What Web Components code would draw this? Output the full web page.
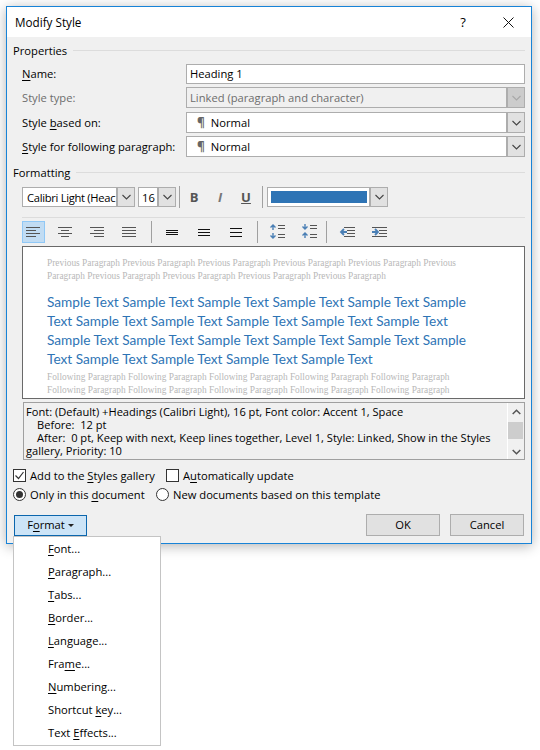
<!DOCTYPE html>
<html>
<head>
<meta charset="utf-8">
<title>Modify Style</title>
<style>
html, body { margin: 0; background: #fff; }
body { font: 11.2px "Open Sans", sans-serif; color: #000; width: 540px; height: 750px; overflow: hidden; }
u { text-underline-offset: 2px; }
</style>
</head>
<body>
<ms-dialog heading="Modify Style">
  <ms-section label="Properties">
    <ms-field><span slot="label"><u>N</u>ame:</span><ms-input value="Heading 1"></ms-input></ms-field>
    <ms-field disabled h="21"><span slot="label">Style type:</span><ms-combo disabled value="Linked (paragraph and character)"></ms-combo></ms-field>
    <ms-field h="21" style="margin-top:1px"><span slot="label">Style <u>b</u>ased on:</span><ms-combo para value="Normal"></ms-combo></ms-field>
    <ms-field h="21"><span slot="label"><u>S</u>tyle for following paragraph:</span><ms-combo para value="Normal"></ms-combo></ms-field>
  </ms-section>
  <ms-formatting></ms-formatting>
  <ms-preview></ms-preview>
  <ms-description></ms-description>
  <ms-options></ms-options>
  <ms-footer></ms-footer>
</ms-dialog>

<script>
const chevron = `<svg width="9" height="6" viewBox="0 0 9 6"><path d="M.5 1l4 4 4-4" fill="none" stroke="currentColor" stroke-width="1.1"/></svg>`;

class MsDialog extends HTMLElement {
	connectedCallback() {
		const shadow = this.attachShadow({ mode: "open" });
		shadow.innerHTML = `
			<style>
				:host {
					display: block;
					box-sizing: border-box;
					width: 526px;
					height: 538px;
					margin: 6px 0 0 6px;
					border: 1px solid #1883d7;
					background: #f0f0f0;
					box-shadow: 0 2px 12px rgba(0,0,0,.3);
				}
				header { display: flex; align-items: center; height: 30px; background: #fff; padding-left: 8px; font-size: 11.7px; }
				header span { flex: 1; }
				.help { width: 12px; margin-right: 34px; font-size: 13px; text-align: center; }
				.close { margin-right: 17px; display: flex; }
				main { padding: 6px 6px 0; }
			</style>
			<header>
				<span>${this.getAttribute('heading')}</span>
				<div class="help">?</div>
				<div class="close"><svg width="11" height="11" viewBox="0 0 11 11"><path d="M.5.5l10 10M10.5.5l-10 10" stroke="#111" stroke-width="1"/></svg></div>
			</header>
			<main><slot></slot></main>
		`;
	}
}
customElements.define('ms-dialog', MsDialog);

class MsSection extends HTMLElement {
	connectedCallback() {
		const shadow = this.attachShadow({ mode: "open" });
		shadow.innerHTML = `
			<style>
				:host { display: block; }
				.head { display: flex; align-items: center; height: 16px; gap: 6px; }
				.head span { margin-bottom: 2px; }
				.head i { flex: 1; height: 1px; background: #dcdcdc; margin-bottom: 1px; }
				.body { display: flex; flex-direction: column; gap: 3px; padding: 5px 0 0 9px; }
			</style>
			<div class="head"><span>${this.getAttribute('label')}</span><i></i></div>
			<div class="body"><slot></slot></div>
		`;
	}
}
customElements.define('ms-section', MsSection);

class MsField extends HTMLElement {
	connectedCallback() {
		const shadow = this.attachShadow({ mode: "open" });
		const h = this.getAttribute('h') || 20;
		shadow.innerHTML = `
			<style>
				:host { display: flex; align-items: center; height: ${h}px; }
				.label { width: 164px; flex: none; white-space: nowrap; margin-bottom: ${h == 20 ? 2 : 0}px; color: ${this.hasAttribute('disabled') ? '#6d6d6d' : '#000'}; }
				.control { flex: 1; display: flex; height: 100%; }
				::slotted(*) { flex: 1; }
			</style>
			<div class="label"><slot name="label"></slot></div>
			<div class="control"><slot></slot></div>
		`;
	}
}
customElements.define('ms-field', MsField);

class MsInput extends HTMLElement {
	connectedCallback() {
		const shadow = this.attachShadow({ mode: "open" });
		shadow.innerHTML = `
			<style>
				:host { display: flex; align-items: center; box-sizing: border-box; border: 1px solid #adadad; background: #fff; padding: 0 0 2px 3px; }
			</style>
			${this.getAttribute('value')}
		`;
	}
}
customElements.define('ms-input', MsInput);

class MsCombo extends HTMLElement {
	connectedCallback() {
		const shadow = this.attachShadow({ mode: "open" });
		const off = this.hasAttribute('disabled');
		const para = this.hasAttribute('para');
		shadow.innerHTML = `
			<style>
				:host { display: flex; box-sizing: border-box; height: 100%; border: 1px solid #adadad; background: ${off ? '#f0f0f0' : '#fff'}; color: ${off ? '#6d6d6d' : '#000'}; }
				.value { flex: 1; min-width: 0; display: flex; align-items: center; gap: 6px; padding-left: ${para ? 10 : 3}px; white-space: nowrap; overflow: hidden; }
				.pilcrow { color: #666; font-weight: 700; font-size: 12px; }
				.btn { flex: none; width: 16px; display: flex; align-items: center; justify-content: center; border-left: 2px solid #adadad; background: ${off ? '#cccccc' : '#e1e1e1'}; color: ${off ? '#a8a8a8' : '#444'}; }
			</style>
			<div class="value">${para ? '<span class="pilcrow">¶</span>' : ''}<slot>${this.getAttribute('value') || ''}</slot></div>
			<div class="btn">${chevron}</div>
		`;
	}
}
customElements.define('ms-combo', MsCombo);

// toolbar glyphs, drawn on a 23x22 box
const lines = (rows) => rows.map(([x1, x2, y, w]) => `<path d="M${x1} ${y}H${x2}" stroke="#555" stroke-width="${w || 1}"/>`).join('');
const arrows = {
	up: (x, y) => `<path d="M${x} ${y + 6}V${y + 1}M${x - 2.5} ${y + 3.5}l2.5-2.5 2.5 2.5" fill="none" stroke="#4a7fb5" stroke-width="1.4"/>`,
	down: (x, y) => `<path d="M${x} ${y}V${y + 5}M${x - 2.5} ${y + 2.5}l2.5 2.5 2.5-2.5" fill="none" stroke="#4a7fb5" stroke-width="1.4"/>`
};
const icons = {
	left: lines([[4, 18, 6.5], [4, 14, 9.5], [4, 18, 12.5], [4, 14, 15.5]]),
	center: lines([[4, 18, 6.5], [7, 15, 9.5], [4, 18, 12.5], [7, 15, 15.5]]),
	right: lines([[4, 18, 6.5], [8, 18, 9.5], [4, 18, 12.5], [8, 18, 15.5]]),
	justify: lines([[4, 18, 6.5], [4, 18, 9.5], [4, 18, 12.5], [4, 18, 15.5]]),
	single: `<path d="M5 9.5H17M5 11.5H17M5 13.5H17" stroke="#111"/>`,
	half: `<path d="M5 8.5H17M5 11.5H17M5 14.5H17" stroke="#111"/>`,
	double: `<path d="M5 7.5H17M5 11.5H17M5 15.5H17" stroke="#111"/>`,
	spaceMore: arrows.up(6, 3) + arrows.down(6, 12) + lines([[11, 18, 4.5], [11, 18, 7.5], [11, 18, 13.5], [11, 18, 16.5]]),
	spaceLess: arrows.down(6, 3) + arrows.up(6, 11) + lines([[11, 18, 4.5], [11, 18, 7.5], [11, 18, 13.5], [11, 18, 16.5]]),
	outdent: lines([[8, 19, 6.5], [11, 19, 9.5], [11, 19, 12.5], [8, 19, 15.5]]) + `<path d="M11 11H5M8 8l-3 3 3 3" fill="none" stroke="#4a7fb5" stroke-width="1.8"/>`,
	indent: lines([[4, 19, 6.5], [11, 19, 9.5], [11, 19, 12.5], [4, 19, 15.5]]) + `<path d="M4 11H10M7 8l3 3-3 3" fill="none" stroke="#4a7fb5" stroke-width="1.8"/>`
};

class MsTool extends HTMLElement {
	connectedCallback() {
		const shadow = this.attachShadow({ mode: "open" });
		const on = this.hasAttribute('active');
		shadow.innerHTML = `
			<style>
				:host { display: flex; box-sizing: border-box; width: 23px; height: 22px; flex: none; border: 1px solid ${on ? '#90c8f6' : 'transparent'}; background: ${on ? '#c1dcf3' : 'transparent'}; }
				svg { margin: -1px; }
			</style>
			<svg width="23" height="22" viewBox="0 0 23 22">${icons[this.getAttribute('icon')]}</svg>
		`;
	}
}
customElements.define('ms-tool', MsTool);

class MsFormatting extends HTMLElement {
	connectedCallback() {
		const shadow = this.attachShadow({ mode: "open" });
		shadow.innerHTML = `
			<style>
				:host { display: block; margin-top: 8px; }
				.head { display: flex; align-items: center; height: 16px; gap: 6px; }
				.head span { margin-bottom: 2px; }
				.head i { flex: 1; height: 1px; background: #dcdcdc; margin-bottom: 1px; }
				.row1 { display: flex; align-items: center; height: 22px; margin: 5px 0 0 9px; }
				.row1 ms-combo { height: 20px; }
				.rule { height: 1px; background: #dcdcdc; margin: 9px 0 3px 9px; }
				.row2 { display: flex; align-items: center; gap: 9px; height: 22px; margin-left: 9px; }
				.sep { width: 1px; height: 22px; background: #a0a0a0; flex: none; }
				.txt { width: 26px; text-align: center; font-size: 13px; color: #555; flex: none; font-weight: 700; }
				.i { font-style: italic; color: #777; } .u { text-decoration: underline; }
			</style>
			<div class="head"><span>Formatting</span><i></i></div>
			<div class="row1">
				<ms-combo style="width:113px;letter-spacing:-.3px"><span style="padding-left:1px">Calibri Light (Heac</span></ms-combo>
				<ms-combo style="width:38px;margin-left:3px" value="16"></ms-combo>
				<div class="sep" style="margin:0 0 0 3px"></div>
				<div class="txt" style="margin-left:1px">B</div>
				<div class="txt i">I</div>
				<div class="txt u">U</div>
				<div class="sep" style="margin:0 4px 0 3px"></div>
				<ms-combo style="width:121px"><div style="flex:1;height:12px;margin-right:2px;background:#2e74b5"></div></ms-combo>
			</div>
			<div class="rule"></div>
			<div class="row2">
				<ms-tool active icon="left"></ms-tool>
				<ms-tool icon="center"></ms-tool>
				<ms-tool icon="right"></ms-tool>
				<ms-tool icon="justify"></ms-tool>
				<div class="sep" style="margin-left:1px"></div>
				<ms-tool icon="single"></ms-tool>
				<ms-tool icon="half"></ms-tool>
				<ms-tool icon="double"></ms-tool>
				<div class="sep"></div>
				<ms-tool icon="spaceMore"></ms-tool>
				<ms-tool icon="spaceLess"></ms-tool>
				<div class="sep" style="margin-left:-5px"></div>
				<ms-tool icon="outdent"></ms-tool>
				<ms-tool icon="indent"></ms-tool>
			</div>
		`;
	}
}
customElements.define('ms-formatting', MsFormatting);

class MsPreview extends HTMLElement {
	connectedCallback() {
		const shadow = this.attachShadow({ mode: "open" });
		const grey = (t) => `<div class="grey">${t}</div>`;
		const sample = (t) => `<div class="sample">${t}</div>`;
		shadow.innerHTML = `
			<style>
				:host { display: block; box-sizing: border-box; height: 153px; margin: 3px 0 0 9px; border: 1px solid #696969; background: #fff; padding: 10px 0 0 24px; overflow: hidden; white-space: nowrap; }
				.grey { font: 9.35px/12.5px "Liberation Serif", serif; color: #b8b8b8; }
				.sample { font: 13.65px/19px Lato, sans-serif; color: #2e74b5; }
				.mid { margin: 11px 0 2px; }
			</style>
			${grey('Previous Paragraph Previous Paragraph Previous Paragraph Previous Paragraph Previous Paragraph Previous')}
			${grey('Paragraph Previous Paragraph Previous Paragraph Previous Paragraph Previous Paragraph')}
			<div class="mid">
				${sample('Sample Text Sample Text Sample Text Sample Text Sample Text Sample')}
				${sample('Text Sample Text Sample Text Sample Text Sample Text Sample Text')}
				${sample('Sample Text Sample Text Sample Text Sample Text Sample Text Sample')}
				${sample('Text Sample Text Sample Text Sample Text Sample Text')}
			</div>
			${grey('Following Paragraph Following Paragraph Following Paragraph Following Paragraph Following Paragraph')}
			${grey('Following Paragraph Following Paragraph Following Paragraph Following Paragraph Following Paragraph')}
		`;
	}
}
customElements.define('ms-preview', MsPreview);

class MsDescription extends HTMLElement {
	connectedCallback() {
		const shadow = this.attachShadow({ mode: "open" });
		shadow.innerHTML = `
			<style>
				:host { display: flex; box-sizing: border-box; height: 58px; margin: 3px 0 0 10px; border: 1px solid #a0a0a0; background: #f0f0f0; font-size: 11.1px; line-height: 13px; }
				.text { flex: 1; padding: 2px 0 0 2px; white-space: nowrap; overflow: hidden; }
				.in { padding-left: 11px; white-space: pre; }
				.bar { width: 17px; flex: none; background: #f0f0f0; border-left: 1px solid #fff; display: flex; flex-direction: column; align-items: center; justify-content: space-between; padding: 6px 0 4px; box-sizing: border-box; position: relative; }
				.thumb { position: absolute; left: 0; right: 1px; top: 19px; height: 17px; background: #cdcdcd; }
				svg { color: #555; display: block; }
			</style>
			<div class="text">
				<div>Font: (Default) +Headings (Calibri Light), 16 pt, Font color: Accent 1, Space</div>
				<div class="in">Before:  12 pt</div>
				<div class="in">After:  0 pt, Keep with next, Keep lines together, Level 1, Style: Linked, Show in the Styles</div>
				<div>gallery, Priority: 10</div>
			</div>
			<div class="bar">
				<svg width="9" height="6" viewBox="0 0 9 6"><path d="M.7 5l3.8-3.8L8.3 5" fill="none" stroke="currentColor" stroke-width="1.5"/></svg>
				<div class="thumb"></div>
				<svg width="9" height="6" viewBox="0 0 9 6"><path d="M.7 1l3.8 3.8L8.3 1" fill="none" stroke="currentColor" stroke-width="1.5"/></svg>
			</div>
		`;
	}
}
customElements.define('ms-description', MsDescription);

class MsCheck extends HTMLElement {
	connectedCallback() {
		const shadow = this.attachShadow({ mode: "open" });
		const radio = this.hasAttribute('radio');
		const on = this.hasAttribute('checked');
		const mark = radio
			? (on ? '<circle cx="6.5" cy="6.5" r="3.5" fill="#333"/>' : '')
			: (on ? '<path d="M2.5 6.5l3 3 5-6.5" fill="none" stroke="#333" stroke-width="1.2"/>' : '');
		const box = radio
			? '<circle cx="6.5" cy="6.5" r="6" fill="#fff" stroke="#333"/>'
			: '<rect x=".5" y=".5" width="12" height="12" fill="#fff" stroke="#333"/>';
		shadow.innerHTML = `
			<style>
				:host { display: inline-flex; align-items: center; gap: 4px; white-space: nowrap; }
				svg { flex: none; display: block; }
			</style>
			<svg width="13" height="13" viewBox="0 0 13 13">${box}${mark}</svg>
			<span><slot></slot></span>
		`;
	}
}
customElements.define('ms-check', MsCheck);

class MsOptions extends HTMLElement {
	connectedCallback() {
		const shadow = this.attachShadow({ mode: "open" });
		shadow.innerHTML = `
			<style>
				:host { display: block; margin-top: 6px; }
				u { text-underline-offset: 2px; }
				.row { display: flex; height: 19px; align-items: center; }
			</style>
			<div class="row">
				<ms-check checked style="width:153px">Add to the <u>S</u>tyles gallery</ms-check>
				<ms-check>A<u>u</u>tomatically update</ms-check>
			</div>
			<div class="row">
				<ms-check radio checked style="width:143px">Only in this <u>d</u>ocument</ms-check>
				<ms-check radio>New documents based on this template</ms-check>
			</div>
		`;
	}
}
customElements.define('ms-options', MsOptions);

class MsButton extends HTMLElement {
	connectedCallback() {
		const shadow = this.attachShadow({ mode: "open" });
		shadow.innerHTML = `
			<style>
				:host { display: flex; align-items: center; justify-content: center; box-sizing: border-box; width: 74px; height: 22px; padding-bottom: 2px; border: 1px solid #adadad; background: #e1e1e1; }
			</style>
			<slot></slot>
		`;
	}
}
customElements.define('ms-button', MsButton);

class MsFormatMenu extends HTMLElement {
	connectedCallback() {
		const shadow = this.attachShadow({ mode: "open" });
		const items = ['<u>F</u>ont...', '<u>P</u>aragraph...', '<u>T</u>abs...', '<u>B</u>order...', '<u>L</u>anguage...', 'Fra<u>m</u>e...', '<u>N</u>umbering...', 'Shortcut <u>k</u>ey...', 'Text <u>E</u>ffects...'];
		shadow.innerHTML = `
			<style>
				:host { display: block; position: relative; width: 73px; height: 21px; }
				u { text-underline-offset: 2px; }
				.btn { box-sizing: border-box; height: 21px; padding-bottom: 2px; border: 1px solid #0b66ad; background: #cce4f7; display: flex; align-items: center; justify-content: center; gap: 3px; }
				.btn i { width: 0; height: 0; border: 3px solid transparent; border-top: 3px solid #222; border-bottom: 0; margin-top: 1px; }
				.menu { position: absolute; left: -1px; top: 21px; box-sizing: border-box; width: 148px; height: 210px; border: 1px solid #c4c4c4; background: #fff; padding: 0 0 0 34px; }
				.menu div { height: 23px; line-height: 23px; white-space: nowrap; }
			</style>
			<div class="btn"><span>F<u>o</u>rmat</span><i></i></div>
			<div class="menu">${items.map(t => `<div>${t}</div>`).join('')}</div>
		`;
	}
}
customElements.define('ms-format-menu', MsFormatMenu);

class MsFooter extends HTMLElement {
	connectedCallback() {
		const shadow = this.attachShadow({ mode: "open" });
		shadow.innerHTML = `
			<style>
				:host { display: flex; align-items: flex-start; gap: 10px; margin-top: 10px; padding-left: 1px; }
				ms-format-menu { margin-top: 1px; margin-right: auto; }
				ms-button { margin-right: 1px; }
				ms-button + ms-button { margin-left: -1px; }
			</style>
			<ms-format-menu></ms-format-menu>
			<ms-button>OK</ms-button>
			<ms-button>Cancel</ms-button>
		`;
	}
}
customElements.define('ms-footer', MsFooter);
</script>
</body>
</html>
